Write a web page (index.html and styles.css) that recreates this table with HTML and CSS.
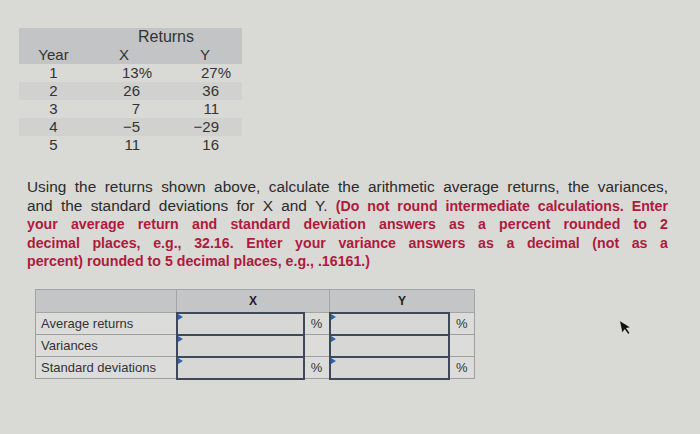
FILE: index.html
```html
<!DOCTYPE html>
<html>
<head>
<meta charset="utf-8">
<link rel="stylesheet" href="styles.css">
</head>
<body>
<div class="page">
  <table class="returns">
    <colgroup><col class="c-year"><col class="c-x"><col class="c-y"></colgroup>
    <thead>
      <tr class="h1"><th></th><th colspan="2" class="ret">Returns</th></tr>
      <tr class="h2"><th class="yr">Year</th><th class="hx">X</th><th class="hy">Y</th></tr>
    </thead>
    <tbody>
      <tr><td class="yr">1</td><td class="vx">13<span class="pct">%</span></td><td class="vy">27<span class="pct">%</span></td></tr>
      <tr class="alt"><td class="yr">2</td><td class="vx">26</td><td class="vy">36</td></tr>
      <tr><td class="yr">3</td><td class="vx">7</td><td class="vy">11</td></tr>
      <tr class="alt"><td class="yr">4</td><td class="vx">&minus;5</td><td class="vy">&minus;29</td></tr>
      <tr><td class="yr">5</td><td class="vx">11</td><td class="vy">16</td></tr>
    </tbody>
  </table>

  <p class="question">
    <span class="line">Using the returns shown above, calculate the arithmetic average returns, the variances,</span>
    <span class="line">and the standard deviations for X and Y. <strong class="note">(Do not round intermediate calculations. Enter</strong></span>
    <span class="line"><strong class="note">your average return and standard deviation answers as a percent rounded to 2</strong></span>
    <span class="line"><strong class="note">decimal places, e.g., 32.16. Enter your variance answers as a decimal (not as a</strong></span>
    <span class="line last"><strong class="note">percent) rounded to 5 decimal places, e.g., .16161.)</strong></span>
  </p>

  <table class="answers">
    <colgroup><col class="a-label"><col class="a-inx"><col class="a-unit"><col class="a-iny"><col class="a-unit"></colgroup>
    <thead>
      <tr><th></th><th colspan="2">X</th><th colspan="2">Y</th></tr>
    </thead>
    <tbody>
      <tr><td class="label">Average returns</td><td class="input"><span class="flag"></span></td><td class="unit">%</td><td class="input"><span class="flag"></span></td><td class="unit">%</td></tr>
      <tr><td class="label">Variances</td><td class="input"><span class="flag"></span></td><td class="unit"></td><td class="input"><span class="flag"></span></td><td class="unit"></td></tr>
      <tr><td class="label">Standard deviations</td><td class="input"><span class="flag"></span></td><td class="unit">%</td><td class="input"><span class="flag"></span></td><td class="unit">%</td></tr>
    </tbody>
  </table>

  <svg class="cursor" width="14" height="18" viewBox="0 0 14 18"><path d="M1 1 L1 14 L4.2 11 L6.6 16.4 L8.6 15.5 L6.3 10.2 L10.6 10.2 Z" fill="#111" stroke="#f2f2f2" stroke-width="0.6"/></svg>
</div>
</body>
</html>
```

FILE: styles.css
```css
html, body {
  margin: 0;
  padding: 0;
}
body {
  background: #d9d9d6;
  width: 700px;
  height: 434px;
  overflow: hidden;
  font-family: "Liberation Sans", Arial, sans-serif;
  color: #2e2e2e;
}
.page {
  position: relative;
  padding: 28px 0 0 0;
}

/* returns table */
.returns {
  margin-left: 19px;
  border-collapse: collapse;
  table-layout: fixed;
  width: 223px;
  font-size: 15px;
  color: #333;
}
.returns .c-year { width: 69px; }
.returns .c-x { width: 77px; }
.returns .c-y { width: 77px; }
.returns th, .returns td {
  padding: 0;
  font-weight: normal;
  height: 18px;
  line-height: 18px;
}
.returns thead tr { background: #c2c4c6; }
.returns .ret { text-align: center; padding-left: 2px; font-size: 16px; }
.returns .yr { text-align: center; }
.returns .hx { text-align: left; padding-left: 31px; }
.returns .hy { text-align: left; padding-left: 35px; }
.returns .vx { text-align: right; padding-right: 25px; }
.returns .vy { text-align: right; padding-right: 23px; }
.returns .pct { margin-right: -11px; letter-spacing: -1px; }
.returns tr.alt { background: #d1d1cf; }

/* question text */
.question {
  margin: 24px 0 0 27px;
  width: 641px;
  font-family: "Liberation Sans", Arial, sans-serif;
  font-size: 15.4px;
  line-height: 18.5px;
  color: #2b2b2b;
}
.question .line {
  display: block;
  white-space: nowrap;
  text-align: justify;
  text-align-last: justify;
}
.question .line.last {
  text-align-last: left;
}
.question .note {
  color: #b01a3c;
  font-weight: bold;
  font-size: 14.2px;
}

/* answers table */
.answers {
  margin: 18px 0 0 35px;
  border-collapse: collapse;
  table-layout: fixed;
  width: 440px;
  font-size: 13px;
}
.answers .a-label { width: 141px; }
.answers .a-inx { width: 127px; }
.answers .a-unit { width: 26px; }
.answers .a-iny { width: 119px; }
.answers th {
  background: #c3c5c7;
  height: 22px;
  border: 1px solid #a2a4a6;
  font-weight: bold;
  font-size: 12px;
  padding: 0;
  color: #222;
}
.answers td {
  height: 20px;
  padding: 0;
  border: 1px solid #9d9e9e;
  background: #dcdcda;
  color: #333;
}
.answers td.label { padding-left: 5px; }
.answers td.unit { text-align: center; }
.answers td.input {
  position: relative;
  border: 2px solid #3e4858;
  background: #d7d8d6;
}
.answers .flag {
  position: absolute;
  left: 0;
  top: 0;
  width: 0;
  height: 0;
  border-top: 3px solid transparent;
  border-bottom: 3px solid transparent;
  border-left: 5px solid #2b63b3;
}

.cursor {
  position: absolute;
  left: 620px;
  top: 318px;
  transform: rotate(-12deg);
}
```
